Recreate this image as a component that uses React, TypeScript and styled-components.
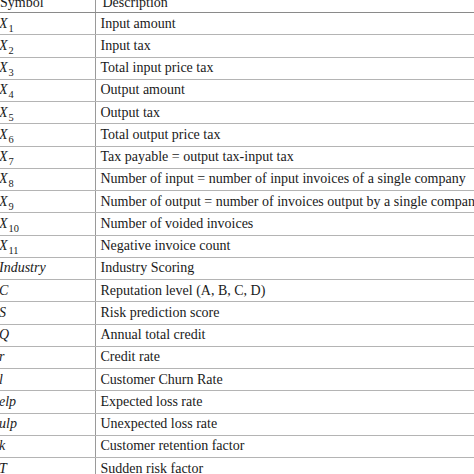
import React from 'react';
import styled, { createGlobalStyle } from 'styled-components';

type Row = {
  sym: string;
  sub?: string;
  desc: string;
};

const rows: Row[] = [
  { sym: 'X', sub: '1', desc: 'Input amount' },
  { sym: 'X', sub: '2', desc: 'Input tax' },
  { sym: 'X', sub: '3', desc: 'Total input price tax' },
  { sym: 'X', sub: '4', desc: 'Output amount' },
  { sym: 'X', sub: '5', desc: 'Output tax' },
  { sym: 'X', sub: '6', desc: 'Total output price tax' },
  { sym: 'X', sub: '7', desc: 'Tax payable = output tax-input tax' },
  { sym: 'X', sub: '8', desc: 'Number of input = number of input invoices of a single company' },
  { sym: 'X', sub: '9', desc: 'Number of output = number of invoices output by a single company' },
  { sym: 'X', sub: '10', desc: 'Number of voided invoices' },
  { sym: 'X', sub: '11', desc: 'Negative invoice count' },
  { sym: 'Industry', desc: 'Industry Scoring' },
  { sym: 'C', desc: 'Reputation level (A, B, C, D)' },
  { sym: 'S', desc: 'Risk prediction score' },
  { sym: 'Q', desc: 'Annual total credit' },
  { sym: 'r', desc: 'Credit rate' },
  { sym: 'l', desc: 'Customer Churn Rate' },
  { sym: 'elp', desc: 'Expected loss rate' },
  { sym: 'ulp', desc: 'Unexpected loss rate' },
  { sym: 'k', desc: 'Customer retention factor' },
  { sym: 'T', desc: 'Sudden risk factor' },
];

const GlobalStyle = createGlobalStyle`
  html, body {
    margin: 0;
    padding: 0;
    background: #fff;
    overflow: hidden;
  }
`;

const Page = styled.div`
  width: 474px;
  height: 474px;
  overflow: hidden;
`;

const Table = styled.table`
  margin: -10px 0 0 -7px;
  width: 580px;
  border-collapse: collapse;
  font-family: "Liberation Serif", "Times New Roman", serif;
  font-size: 14px;
  color: #1a1a1a;
`;

const HeadCell = styled.th<{ $first?: boolean }>`
  height: 22.5px;
  padding: 3px 0 0 7px;
  text-align: left;
  font-weight: normal;
  border-bottom: 1.5px solid #8a8a8a;
  border-right: ${p => (p.$first ? '1px solid #9a9a9a' : 'none')};
  width: ${p => (p.$first ? '102px' : 'auto')};
  box-sizing: border-box;
  line-height: 1;
`;

const Cell = styled.td<{ $first?: boolean }>`
  height: 22.26px;
  padding: 0 0 0 ${p => (p.$first ? '6px' : '5px')};
  white-space: nowrap;
  border-bottom: 1px solid #b4b4b4;
  border-right: ${p => (p.$first ? '1px solid #9a9a9a' : 'none')};
  font-style: ${p => (p.$first ? 'italic' : 'normal')};
  box-sizing: border-box;
  line-height: 1;
`;

const Sub = styled.sub`
  font-style: normal;
  font-size: 74%;
  vertical-align: -4px;
  margin-left: 1px;
  line-height: 0;
`;

export default function App() {
  return (
    <Page>
      <GlobalStyle />
      <Table>
        <thead>
          <tr>
            <HeadCell $first>Symbol</HeadCell>
            <HeadCell>Description</HeadCell>
          </tr>
        </thead>
        <tbody>
          {rows.map((r, i) => (
            <tr key={i}>
              <Cell $first>
                {r.sym}
                {r.sub ? <Sub>{r.sub}</Sub> : null}
              </Cell>
              <Cell>{r.desc}</Cell>
            </tr>
          ))}
        </tbody>
      </Table>
    </Page>
  );
}
